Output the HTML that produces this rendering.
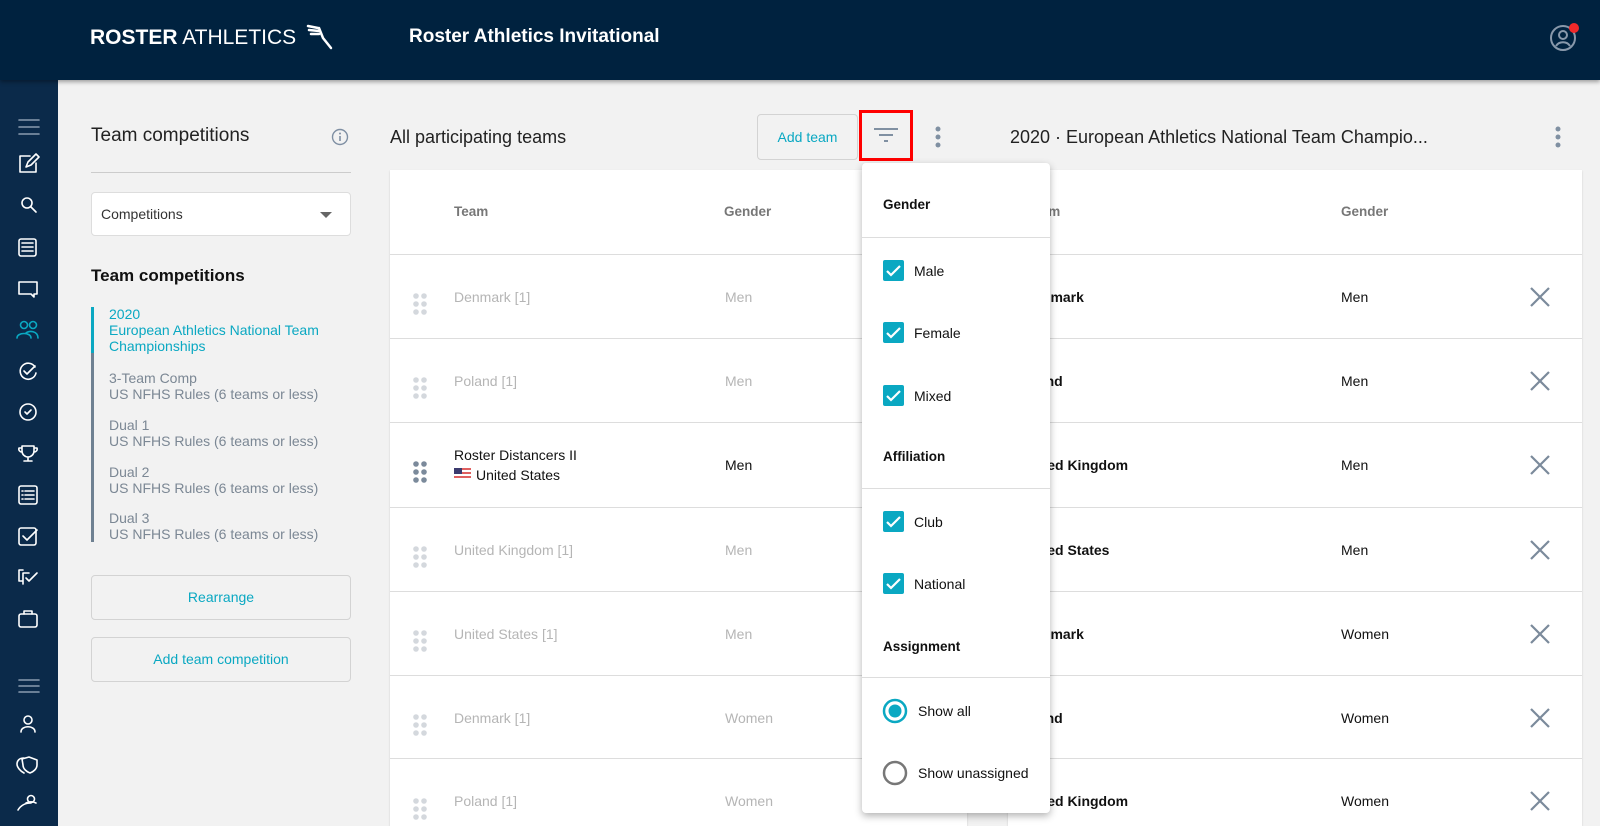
<!DOCTYPE html>
<html><head><meta charset="utf-8"><style>
*{box-sizing:border-box;margin:0;padding:0}
html,body{width:1600px;height:826px;overflow:hidden}
body{background:#f2f2f2;font-family:"Liberation Sans",Arial,sans-serif;position:relative;color:#111}
.a{position:absolute}
.hdr{left:0;top:0;width:1600px;height:80px;background:#00223f;box-shadow:0 2px 4px rgba(0,0,0,.35);z-index:3}
.side{left:0;top:80px;width:58px;height:746px;background:#0b2a4a}
.card{background:#fff;box-shadow:0 1px 2px rgba(0,0,0,.15);overflow:hidden}
.hl{position:absolute;left:0;right:0;height:1px;background:#ddd}
.t{position:absolute;font-size:14px;white-space:nowrap}
.btn{position:absolute;border:1px solid #d3d3d3;border-radius:4px;background:#f2f2f2;color:#0aa8c2;font-size:14px;text-align:center}
.cb{position:absolute;left:883px;width:21px;height:21px;background:#0aa8c2;border-radius:2px}
</style></head><body>
<div class="a hdr">
  <div class="t" style="left:90px;top:26px;font-size:21px;color:#fff"><b>ROSTER</b> ATHLETICS</div>
  <svg class="a" style="left:306px;top:24px" width="28" height="28" viewBox="0 0 28 28"><path d="M2 2l10 2M3 6l10 1M5 10l8 0M13 4l4 10 8 10" stroke="#fff" stroke-width="2.5" fill="none" stroke-linecap="round"/></svg>
  <div class="t" style="left:409px;top:26px;font-size:19px;font-weight:bold;color:#fff">Roster Athletics Invitational</div>
  <svg class="a" style="left:1549px;top:23px" width="30" height="30" viewBox="0 0 30 30"><circle cx="14" cy="15" r="12" stroke="#8898aa" stroke-width="2" fill="none"/><circle cx="14" cy="12" r="4" stroke="#8898aa" stroke-width="2" fill="none"/><path d="M7 23c3-5 11-5 14 0" stroke="#8898aa" stroke-width="2" fill="none"/><circle cx="25" cy="5" r="5" fill="#f1292a"/></svg>
</div>
<div class="a side">
<svg width="58" height="746" viewBox="0 80 58 746" fill="none" stroke="#fff" stroke-width="1.6" stroke-linecap="round" stroke-linejoin="round">
<g stroke="#8a9bb0"><path d="M19 120h20M19 127h20M19 134h20"/></g>
<path d="M30 156h-10v16h16v-9M26 167l2-5 8-8 3 3-8 8z"/>
<circle cx="27" cy="203" r="5"/><path d="M31 207l5 5"/>
<rect x="19" y="239" width="17" height="17" rx="2"/><path d="M22 243h11M22 247h11M22 251h11"/>
<path d="M19 282h18v12h-3v3l-3-3h-12z"/>
<g stroke="#0aa8c2"><circle cx="24" cy="325" r="3.5"/><circle cx="33" cy="325" r="3.5"/><path d="M17 338c0-6 14-6 14 0M26 333c3-3 12-2 12 5"/></g>
<path d="M35 367a8 8 0 1 0 1 6"/><path d="M24 371l3 3 8-8"/>
<circle cx="28" cy="412" r="8"/><path d="M25 412l2 2 4-4"/>
<path d="M22 446h12v5a6 6 0 0 1-12 0zM28 457v4M24 461h8M22 448h-3a3 3 0 0 0 3 4M34 448h3a3 3 0 0 1-3 4"/>
<rect x="19" y="486" width="18" height="18" rx="2"/><path d="M22 491h1M25 491h9M22 495h1M25 495h9M22 499h1M25 499h9"/>
<rect x="19" y="528" width="17" height="17" rx="2"/><path d="M23 536l4 4 10-10"/>
<path d="M22 581h-3v-11h4M23 584v-11h6M26 578l3 3 8-8"/>
<rect x="19" y="614" width="18" height="13" rx="2"/><path d="M24 614v-3h8v3"/>
<g stroke="#8a9bb0"><path d="M19 680h20M19 686h20M19 692h20"/></g>
<circle cx="28" cy="720" r="4"/><path d="M21 732c0-7 14-7 14 0"/>
<path d="M24 758c-5 0-7 3-7 6s3 7 7 9M22 759l7-2 8 3v5c0 4-4 7-7 8-3-1-7-4-7-8z"/>
<circle cx="31" cy="799" r="3.5"/><path d="M18 810c3-5 8-7 13-7M26 803c4-2 8-1 10 0"/>
</svg>
</div>

<!-- left panel -->
<div class="t" style="left:91px;top:125px;font-size:19px;color:#222">Team competitions</div>
<svg class="a" style="left:331px;top:128px" width="18" height="18" viewBox="0 0 18 18"><circle cx="9" cy="9" r="7.5" stroke="#7f8fa3" stroke-width="1.4" fill="none"/><path d="M9 8v5" stroke="#7f8fa3" stroke-width="1.6"/><circle cx="9" cy="5.5" r="1" fill="#7f8fa3"/></svg>
<div class="a" style="left:91px;top:172px;width:260px;height:1px;background:#ccc"></div>
<div class="a" style="left:91px;top:192px;width:260px;height:44px;background:#fff;border:1px solid #ddd;border-radius:4px"></div>
<div class="t" style="left:101px;top:206px;color:#333">Competitions</div>
<div class="a" style="left:320px;top:212px;width:0;height:0;border-left:6px solid transparent;border-right:6px solid transparent;border-top:6px solid #666"></div>
<div class="t" style="left:91px;top:266px;font-size:17px;font-weight:bold">Team competitions</div>
<div class="a" style="left:91px;top:307px;width:3px;height:46px;background:#0aa8c2"></div>
<div class="a" style="left:91px;top:353px;width:3px;height:189px;background:#6f8192"></div>
<div class="t" style="left:109px;top:306px;color:#0aa8c2;line-height:16px">2020<br>European Athletics National Team<br>Championships</div>
<div class="t" style="left:109px;top:370px;color:#7b8794;line-height:16px">3-Team Comp<br>US NFHS Rules (6 teams or less)</div>
<div class="t" style="left:109px;top:417px;color:#7b8794;line-height:16px">Dual 1<br>US NFHS Rules (6 teams or less)</div>
<div class="t" style="left:109px;top:464px;color:#7b8794;line-height:16px">Dual 2<br>US NFHS Rules (6 teams or less)</div>
<div class="t" style="left:109px;top:510px;color:#7b8794;line-height:16px">Dual 3<br>US NFHS Rules (6 teams or less)</div>
<div class="btn" style="left:91px;top:575px;width:260px;height:45px;line-height:43px">Rearrange</div>
<div class="btn" style="left:91px;top:637px;width:260px;height:45px;line-height:43px">Add team competition</div>

<!-- middle -->
<div class="t" style="left:390px;top:127px;font-size:18px;color:#222">All participating teams</div>
<div class="btn" style="left:757px;top:114px;width:101px;height:46px;line-height:44px">Add team</div>
<div class="a" style="left:859px;top:110px;width:54px;height:51px;border:3px solid #f00"></div>
<svg class="a" style="left:872px;top:126px" width="28" height="20" viewBox="0 0 28 20"><path d="M2 3h24M7 9h14M12 15h4" stroke="#8090a2" stroke-width="2"/></svg>
<svg class="a" style="left:933px;top:125px" width="10" height="26"><circle cx="5" cy="4" r="2.5" fill="#8090a2"/><circle cx="5" cy="12" r="2.5" fill="#8090a2"/><circle cx="5" cy="20" r="2.5" fill="#8090a2"/></svg>
<div class="a card" style="left:390px;top:170px;width:577px;height:656px">
  <div class="t" style="left:64px;top:34px;font-weight:bold;color:#777;font-size:13.5px">Team</div>
  <div class="t" style="left:334px;top:34px;font-weight:bold;color:#777;font-size:13.5px">Gender</div>
  <div class="hl" style="top:84px"></div><div class="hl" style="top:168px"></div><div class="hl" style="top:252px"></div><div class="hl" style="top:337px"></div><div class="hl" style="top:421px"></div><div class="hl" style="top:505px"></div><div class="hl" style="top:588px"></div>
</div>
<svg class="a" style="left:0;top:0" width="1600" height="826">
<g fill="#d4d8dd">
<g id="d"><circle cx="416" cy="296" r="2.8"/><circle cx="424" cy="296" r="2.8"/><circle cx="416" cy="304" r="2.8"/><circle cx="424" cy="304" r="2.8"/><circle cx="416" cy="312" r="2.8"/><circle cx="424" cy="312" r="2.8"/></g>
<use href="#d" y="84"/><use href="#d" y="253"/><use href="#d" y="337"/><use href="#d" y="421"/><use href="#d" y="505"/>
</g>
<g fill="#7b8a9b"><circle cx="416" cy="464" r="2.8"/><circle cx="424" cy="464" r="2.8"/><circle cx="416" cy="472" r="2.8"/><circle cx="424" cy="472" r="2.8"/><circle cx="416" cy="480" r="2.8"/><circle cx="424" cy="480" r="2.8"/></g>
</svg>
<div class="t" style="left:454px;top:289px;color:#b5b5b5">Denmark [1]</div><div class="t" style="left:725px;top:289px;color:#b5b5b5">Men</div>
<div class="t" style="left:454px;top:373px;color:#b5b5b5">Poland [1]</div><div class="t" style="left:725px;top:373px;color:#b5b5b5">Men</div>
<div class="t" style="left:454px;top:447px;color:#111">Roster Distancers II</div>
<div class="a" style="left:454px;top:468px;width:17px;height:12px;background:repeating-linear-gradient(#e06060 0 2px,#fff 2px 4px)"></div><div class="a" style="left:454px;top:468px;width:8px;height:6px;background:#3c3b6e"></div>
<div class="t" style="left:476px;top:467px;color:#111">United States</div>
<div class="t" style="left:725px;top:457px;color:#111">Men</div>
<div class="t" style="left:454px;top:542px;color:#b5b5b5">United Kingdom [1]</div><div class="t" style="left:725px;top:542px;color:#b5b5b5">Men</div>
<div class="t" style="left:454px;top:626px;color:#b5b5b5">United States [1]</div><div class="t" style="left:725px;top:626px;color:#b5b5b5">Men</div>
<div class="t" style="left:454px;top:710px;color:#b5b5b5">Denmark [1]</div><div class="t" style="left:725px;top:710px;color:#b5b5b5">Women</div>
<div class="t" style="left:454px;top:793px;color:#b5b5b5">Poland [1]</div><div class="t" style="left:725px;top:793px;color:#b5b5b5">Women</div>

<!-- right -->
<div class="t" style="left:1010px;top:127px;font-size:18px;color:#222">2020 · European Athletics National Team Champio...</div>
<svg class="a" style="left:1553px;top:125px" width="10" height="26"><circle cx="5" cy="4" r="2.5" fill="#8090a2"/><circle cx="5" cy="12" r="2.5" fill="#8090a2"/><circle cx="5" cy="20" r="2.5" fill="#8090a2"/></svg>
<div class="a card" style="left:1008px;top:170px;width:574px;height:656px">
  <div class="t" style="left:18px;top:34px;font-weight:bold;color:#777;font-size:13.5px">Team</div>
  <div class="t" style="left:333px;top:34px;font-weight:bold;color:#777;font-size:13.5px">Gender</div>
  <div class="hl" style="top:84px"></div><div class="hl" style="top:168px"></div><div class="hl" style="top:252px"></div><div class="hl" style="top:337px"></div><div class="hl" style="top:421px"></div><div class="hl" style="top:505px"></div><div class="hl" style="top:588px"></div>
  <div class="t" style="left:16px;top:119px;font-weight:bold">Denmark</div><div class="t" style="left:333px;top:119px">Men</div>
  <div class="t" style="left:8px;top:203px;font-weight:bold">Poland</div><div class="t" style="left:333px;top:203px">Men</div>
  <div class="t" style="left:12px;top:287px;font-weight:bold">United Kingdom</div><div class="t" style="left:333px;top:287px">Men</div>
  <div class="t" style="left:12px;top:372px;font-weight:bold">United States</div><div class="t" style="left:333px;top:372px">Men</div>
  <div class="t" style="left:16px;top:456px;font-weight:bold">Denmark</div><div class="t" style="left:333px;top:456px">Women</div>
  <div class="t" style="left:8px;top:540px;font-weight:bold">Poland</div><div class="t" style="left:333px;top:540px">Women</div>
  <div class="t" style="left:12px;top:623px;font-weight:bold">United Kingdom</div><div class="t" style="left:333px;top:623px">Women</div>
  <svg class="a" style="left:522px;top:117px" width="20" height="620" viewBox="0 0 20 620"><g stroke="#7b8a9b" stroke-width="2.2"><g id="x"><path d="M1 1l18 18M19 1l-18 18"/></g><use href="#x" y="84"/><use href="#x" y="168"/><use href="#x" y="253"/><use href="#x" y="337"/><use href="#x" y="421"/><use href="#x" y="504"/></g></svg>
</div>

<!-- dropdown -->
<div class="a" style="left:862px;top:163px;width:188px;height:650px;background:#fff;border-radius:4px;box-shadow:0 3px 8px rgba(0,0,0,.3);z-index:5">
  <div class="t" style="left:21px;top:34px;font-weight:bold;font-size:13.5px">Gender</div>
  <div class="hl" style="top:74px"></div>
  <div class="t" style="left:21px;top:286px;font-weight:bold;font-size:13.5px">Affiliation</div>
  <div class="hl" style="top:325px"></div>
  <div class="t" style="left:21px;top:476px;font-weight:bold;font-size:13.5px">Assignment</div>
  <div class="hl" style="top:514px"></div>
</div>
<div class="a" style="z-index:6;left:0;top:0">
<div class="cb" style="top:260px"></div><div class="t" style="left:914px;top:263px">Male</div>
<div class="cb" style="top:322px"></div><div class="t" style="left:914px;top:325px">Female</div>
<div class="cb" style="top:385px"></div><div class="t" style="left:914px;top:388px">Mixed</div>
<div class="cb" style="top:511px"></div><div class="t" style="left:914px;top:514px">Club</div>
<div class="cb" style="top:573px"></div><div class="t" style="left:914px;top:576px">National</div>
<svg class="a" style="left:0;top:0" width="1100" height="826"><g stroke="#fff" stroke-width="2.2" fill="none"><g id="ck"><path d="M887 271l4 4 9-9"/></g><use href="#ck" y="62"/><use href="#ck" y="125"/><use href="#ck" y="251"/><use href="#ck" y="313"/></g>
<circle cx="895" cy="711" r="11" stroke="#0aa8c2" stroke-width="2.5" fill="none"/><circle cx="895" cy="711" r="6.5" fill="#0aa8c2"/>
<circle cx="895" cy="773" r="11" stroke="#777" stroke-width="2.5" fill="none"/></svg>
<div class="t" style="left:918px;top:703px">Show all</div>
<div class="t" style="left:918px;top:765px">Show unassigned</div>
</div>
</body></html>
